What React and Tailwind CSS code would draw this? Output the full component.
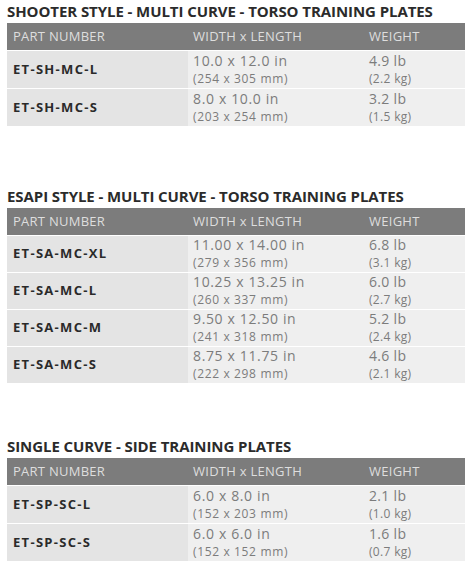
import React from "react";

const tables = [
  {
    title: "SHOOTER STYLE - MULTI CURVE - TORSO TRAINING PLATES",
    rowH: "h-[37px]",
    mt: "mt-0",
    rows: [
      { part: "ET-SH-MC-L", size: "10.0 x 12.0 in", mm: "(254 x 305 mm)", lb: "4.9 lb", kg: "(2.2 kg)" },
      { part: "ET-SH-MC-S", size: "8.0 x 10.0 in", mm: "(203 x 254 mm)", lb: "3.2 lb", kg: "(1.5 kg)" },
    ],
  },
  {
    title: "ESAPI STYLE - MULTI CURVE - TORSO TRAINING PLATES",
    rowH: "h-[36px]",
    mt: "mt-[59px]",
    rows: [
      { part: "ET-SA-MC-XL", size: "11.00 x 14.00 in", mm: "(279 x 356 mm)", lb: "6.8 lb", kg: "(3.1 kg)" },
      { part: "ET-SA-MC-L", size: "10.25 x 13.25 in", mm: "(260 x 337 mm)", lb: "6.0 lb", kg: "(2.7 kg)" },
      { part: "ET-SA-MC-M", size: "9.50 x 12.50 in", mm: "(241 x 318 mm)", lb: "5.2 lb", kg: "(2.4 kg)" },
      { part: "ET-SA-MC-S", size: "8.75 x 11.75 in", mm: "(222 x 298 mm)", lb: "4.6 lb", kg: "(2.1 kg)" },
    ],
  },
  {
    title: "SINGLE CURVE - SIDE TRAINING PLATES",
    rowH: "h-[37px]",
    mt: "mt-[52px]",
    rows: [
      { part: "ET-SP-SC-L", size: "6.0 x 8.0 in", mm: "(152 x 203 mm)", lb: "2.1 lb", kg: "(1.0 kg)" },
      { part: "ET-SP-SC-S", size: "6.0 x 6.0 in", mm: "(152 x 152 mm)", lb: "1.6 lb", kg: "(0.7 kg)" },
    ],
  },
];

const SpecTable = ({ table }) => (
  <section className={table.mt}>
    <h2 className="h-[23px] flex items-center text-[15px] font-bold text-[#2b2b2b] tracking-[-0.005em] leading-none">
      {table.title}
    </h2>
    <div className="grid grid-cols-[181px_177px_100px] w-[458px] gap-y-px bg-white">
      <div className="h-[27px] bg-[#7c7c7c] text-[#dedede] text-[13px] flex items-center pl-[6px] tracking-[0.02em]">PART NUMBER</div>
      <div className="h-[27px] bg-[#7c7c7c] text-[#dedede] text-[13px] flex items-center pl-[5px] tracking-[0.02em]">WIDTH x LENGTH</div>
      <div className="h-[27px] bg-[#7c7c7c] text-[#dedede] text-[13px] flex items-center pl-[4px] tracking-[0.02em]">WEIGHT</div>
      {table.rows.map((row) => (
        <React.Fragment key={row.part}>
          <div className={`${table.rowH} bg-[#e4e4e4] flex items-center pl-[6px] text-[13px] font-bold text-[#2a2a2a] tracking-[0.1em]`}>
            {row.part}
          </div>
          <div className={`${table.rowH} bg-[#efefef] flex flex-col justify-center pl-[5px] text-[#7c7c7c] tracking-[0.04em]`}>
            <div className="text-[14px] leading-[18px]">{row.size}</div>
            <div className="text-[12px] leading-[18px]">{row.mm}</div>
          </div>
          <div className={`${table.rowH} bg-[#efefef] flex flex-col justify-center pl-[4px] text-[#7c7c7c] tracking-[0.02em]`}>
            <div className="text-[14px] leading-[18px]">{row.lb}</div>
            <div className="text-[12px] leading-[18px]">{row.kg}</div>
          </div>
        </React.Fragment>
      ))}
    </div>
  </section>
);

const App = () => {
  return (
    <div className="w-[474px] h-[569px] bg-white px-[7px] font-['Open_Sans',sans-serif] overflow-hidden">
      {tables.map((t) => (
        <SpecTable key={t.title} table={t} />
      ))}
    </div>
  );
};

export default App;
